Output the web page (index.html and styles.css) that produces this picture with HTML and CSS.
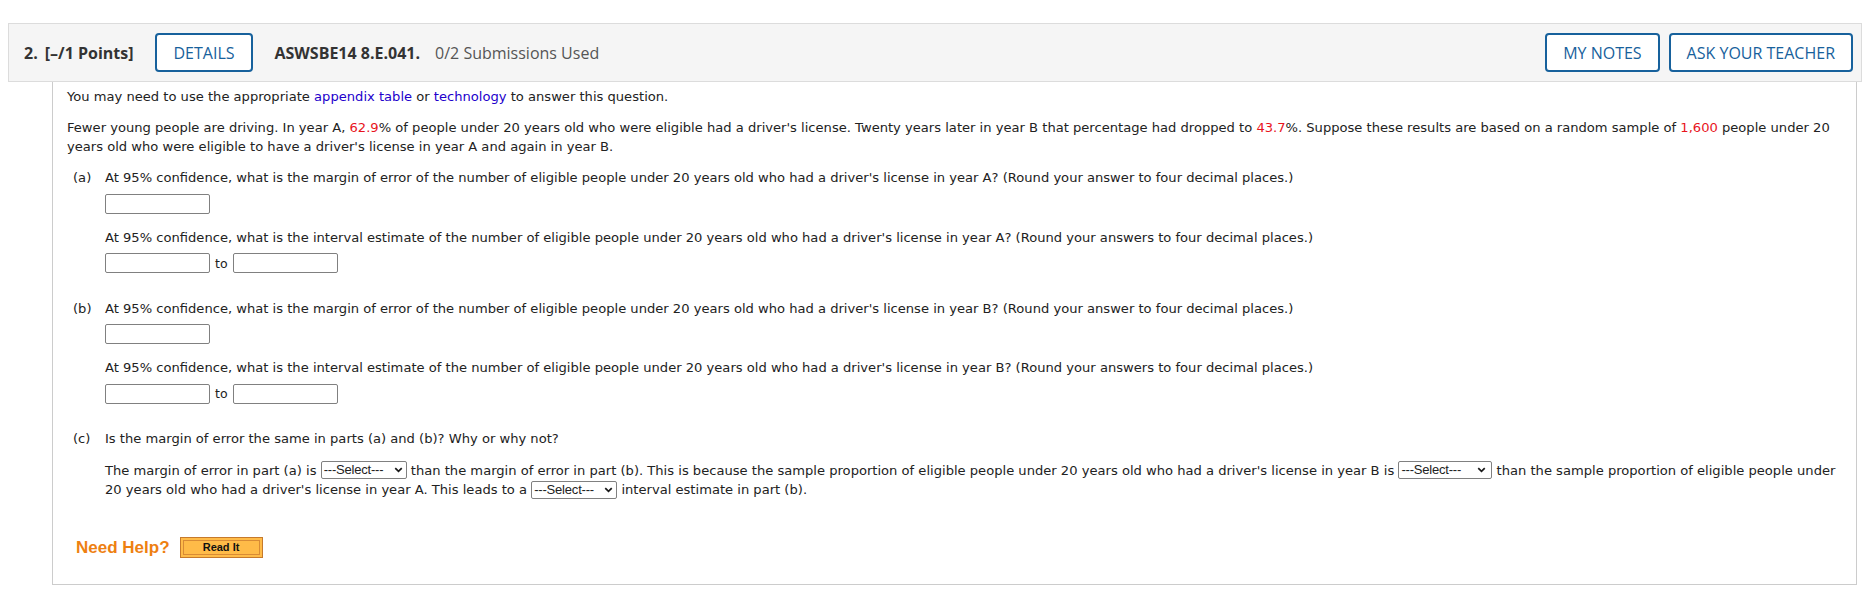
FILE: index.html
```html
<!DOCTYPE html>
<html lang="en">
<head>
<meta charset="utf-8">
<title>Question 2</title>
<link rel="stylesheet" href="styles.css">
</head>
<body>
<div class="question">
  <div class="qhead">
    <div class="qhead-left">
      <span class="qnum">2.</span>
      <span class="qpoints">[–/1 Points]</span>
      <button class="hbtn">DETAILS</button>
      <span class="qcode">ASWSBE14 8.E.041.</span>
      <span class="qsubs">0/2 Submissions Used</span>
    </div>
    <div class="qhead-right">
      <button class="hbtn">MY NOTES</button>
      <button class="hbtn">ASK YOUR TEACHER</button>
    </div>
  </div>
  <div class="qbody">
    <p class="intro">You may need to use the appropriate <a class="lnk" href="#">appendix table</a> or <a class="lnk" href="#">technology</a> to answer this question.</p>
    <p class="intro">Fewer young people are driving. In year A, <span class="red">62.9</span>% of people under 20 years old who were eligible had a driver's license. Twenty years later in year B that percentage had dropped to <span class="red">43.7</span>%. Suppose these results are based on a random sample of <span class="red">1,600</span> people under 20 years old who were eligible to have a driver's license in year A and again in year B.</p>

    <div class="part">
      <div class="plabel">(a)</div>
      <div class="pbody">
        <div class="qtext">At 95% confidence, what is the margin of error of the number of eligible people under 20 years old who had a driver's license in year A? (Round your answer to four decimal places.)</div>
        <div class="row"><span class="box"></span></div>
        <div class="qtext q2">At 95% confidence, what is the interval estimate of the number of eligible people under 20 years old who had a driver's license in year A? (Round your answers to four decimal places.)</div>
        <div class="row"><span class="box"></span><span class="to">to</span><span class="box"></span></div>
      </div>
    </div>

    <div class="part">
      <div class="plabel">(b)</div>
      <div class="pbody">
        <div class="qtext">At 95% confidence, what is the margin of error of the number of eligible people under 20 years old who had a driver's license in year B? (Round your answer to four decimal places.)</div>
        <div class="row"><span class="box"></span></div>
        <div class="qtext q2">At 95% confidence, what is the interval estimate of the number of eligible people under 20 years old who had a driver's license in year B? (Round your answers to four decimal places.)</div>
        <div class="row"><span class="box"></span><span class="to">to</span><span class="box"></span></div>
      </div>
    </div>

    <div class="part">
      <div class="plabel">(c)</div>
      <div class="pbody">
        <div class="qtext">Is the margin of error the same in parts (a) and (b)? Why or why not?</div>
        <div class="qtext q3">The margin of error in part (a) is <span class="sel"><span class="seltxt">---Select---</span><svg class="chev" viewBox="0 0 10 7" width="9" height="6"><path d="M1.2 1.2 L5 5 L8.8 1.2" fill="none" stroke="#1a1a1a" stroke-width="2"/></svg></span> than the margin of error in part (b). This is because the sample proportion of eligible people under 20 years old who had a driver's license in year B is <span class="sel sel-wide"><span class="seltxt">---Select---</span><svg class="chev" viewBox="0 0 10 7" width="9" height="6"><path d="M1.2 1.2 L5 5 L8.8 1.2" fill="none" stroke="#1a1a1a" stroke-width="2"/></svg></span> than the sample proportion of eligible people under 20 years old who had a driver's license in year A. This leads to a <span class="sel"><span class="seltxt">---Select---</span><svg class="chev" viewBox="0 0 10 7" width="9" height="6"><path d="M1.2 1.2 L5 5 L8.8 1.2" fill="none" stroke="#1a1a1a" stroke-width="2"/></svg></span> interval estimate in part (b).</div>
      </div>
    </div>

    <div class="help">
      <span class="needhelp">Need Help?</span>
      <button class="readit"><span>Read It</span></button>
    </div>
  </div>
</div>
</body>
</html>
```

FILE: styles.css
```css
body {
  margin: 8px;
  background: #ffffff;
  font-family: "DejaVu Sans", Verdana, sans-serif;
}

.question {
  margin-top: 15px;
  width: 1854px;
}

.qhead {
  display: flex;
  align-items: center;
  justify-content: space-between;
  height: 59px;
  box-sizing: border-box;
  border: 1px solid #dcdcdc;
  background: #f5f5f5;
  padding: 0 8px 0 15px;
  font-family: "Open Sans", "Noto Sans", sans-serif;
  font-size: 16px;
}

.qhead-left {
  display: flex;
  align-items: center;
}

.qhead-right {
  display: flex;
  align-items: center;
  gap: 9px;
}

.qnum {
  font-weight: 700;
  color: #333;
  margin-right: 7px;
}

.qpoints {
  font-weight: 700;
  color: #333;
  margin-right: 22px;
}

.hbtn {
  height: 39px;
  box-sizing: border-box;
  border: 2px solid #17619c;
  border-radius: 4px;
  background: #ffffff;
  color: #17619c;
  font-family: "Open Sans", "Noto Sans", sans-serif;
  font-size: 16px;
  padding: 0 16px;
  margin: 0;
}

.qcode {
  font-weight: 700;
  color: #333;
  margin-left: 22px;
  margin-right: 15px;
}

.qsubs {
  color: #555;
}

.qbody {
  margin-left: 44px;
  margin-right: 5px;
  border: 1px solid #cccccc;
  border-top: none;
  padding: 5px 8px 26px 14px;
  font-size: 13.1px;
  line-height: 19px;
  color: #222;
}

.intro {
  margin: 0 0 12px 0;
}

.lnk {
  color: #2200cc;
  text-decoration: none;
}

.red {
  color: #e8141c;
}

.part {
  display: flex;
  padding-left: 6px;
  margin-bottom: 25.5px;
}

.plabel {
  width: 32px;
  flex: none;
}

.pbody {
  flex: 1;
}

.row {
  display: flex;
  align-items: center;
  gap: 5px;
  margin-top: 6.5px;
  height: 20px;
}

.q2 {
  margin-top: 14px;
}

.q3 {
  margin-top: 12.5px;
}

.box {
  display: inline-block;
  width: 105px;
  height: 20px;
  box-sizing: border-box;
  border: 1px solid #808080;
  border-radius: 2px;
  background: #fff;
}

.to {
  font-size: 12.5px;
  color: #222;
}

.sel {
  display: inline-flex;
  align-items: center;
  justify-content: space-between;
  width: 86px;
  height: 18px;
  box-sizing: border-box;
  border: 1px solid #808080;
  border-radius: 2px;
  padding: 0 3px 0 2px;
  vertical-align: middle;
  font-family: "Liberation Sans", Arial, sans-serif;
  font-size: 13px;
  line-height: 16px;
  letter-spacing: -0.2px;
  color: #222;
  background: #fff;
  position: relative;
  top: -1px;
}

.sel-wide {
  width: 94px;
  padding-right: 5px;
}

.chev {
  flex: none;
}

.help {
  display: flex;
  align-items: center;
  gap: 10px;
  margin-top: 37px;
  padding-left: 9px;
}

.needhelp {
  font-family: "Liberation Sans", Arial, sans-serif;
  font-weight: 700;
  font-size: 17px;
  color: #ee8011;
}

.readit {
  width: 83px;
  height: 21px;
  box-sizing: border-box;
  border: 1px solid #c67a2c;
  background: #ffbb48;
  padding: 2px;
  margin: 0;
  display: flex;
}

.readit span {
  flex: 1;
  border: 1px solid #d88b35;
  font-family: "Liberation Sans", Arial, sans-serif;
  font-weight: 700;
  font-size: 11px;
  line-height: 13px;
  color: #111;
  text-align: center;
}
```
